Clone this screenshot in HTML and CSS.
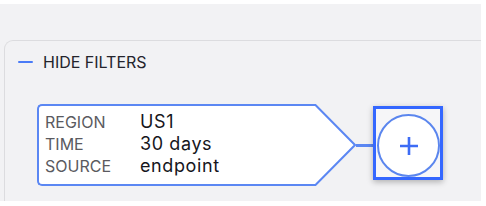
FILE: index.html
```html
<!DOCTYPE html>
<html lang="en">
<head>
<meta charset="utf-8">
<title>Filters</title>
<link rel="stylesheet" href="styles.css">
</head>
<body>
<div class="frame">
  <section class="card">
    <header class="card-head">
      <span class="minus"></span>
      <span class="head-label">HIDE FILTERS</span>
    </header>
    <div class="filter-row">
      <div class="pill">
        <div class="pill-body">
          <span class="key">REGION</span><span class="val">US1</span>
          <span class="key">TIME</span><span class="val">30 days</span>
          <span class="key">SOURCE</span><span class="val">endpoint</span>
        </div>
        <svg class="pill-tip" width="41" height="82" viewBox="0 0 41 82">
          <polygon points="0,1 0.5,1 40,41 0.5,81 0,81" fill="#ffffff"/>
          <polyline points="0,1 0.5,1 40,41 0.5,81 0,81" fill="none" stroke="#5b87f3" stroke-width="2"/>
        </svg>
      </div>
      <span class="connector"></span>
      <div class="add-focus">
        <button class="add-btn" type="button" aria-label="Add filter">
          <svg width="20" height="20" viewBox="0 0 20 20">
            <path d="M10 1 V19 M1 10 H19" stroke="#3d6cf5" stroke-width="2.6" fill="none"/>
          </svg>
        </button>
      </div>
    </div>
  </section>
</div>
</body>
</html>
```

FILE: styles.css
```css
html, body {
  margin: 0;
  padding: 0;
  background: #ffffff;
}

body {
  font-family: Inter, "Noto Sans", "Liberation Sans", sans-serif;
  width: 486px;
  height: 206px;
  overflow: hidden;
}

.frame {
  margin-top: 4px;
  width: 481px;
  height: 197px;
  background: #f2f2f4;
  overflow: hidden;
  padding-top: 36px;
  box-sizing: border-box;
}

.card {
  margin-left: 4px;
  height: 200px;
  width: 520px;
  border-top: 1px solid #dcdcdf;
  border-left: 1px solid #dcdcdf;
  border-radius: 9px 0 0 0;
  background: #f2f2f4;
  box-sizing: border-box;
}

.card-head {
  display: flex;
  align-items: center;
  gap: 10px;
  padding: 11px 0 0 13px;
  height: 20px;
}

.minus {
  display: block;
  width: 15px;
  height: 2px;
  background: #4a7bf7;
  border-radius: 1px;
}

.head-label {
  font-size: 16px;
  line-height: 20px;
  color: #24242c;
}

.filter-row {
  display: flex;
  align-items: flex-start;
  margin-top: 32px;
  margin-left: 32px;
}

.pill {
  display: flex;
  height: 82px;
}

.pill-body {
  width: 278px;
  height: 82px;
  box-sizing: border-box;
  border: 2px solid #5b87f3;
  border-right: none;
  border-radius: 5px 0 0 5px;
  background: #ffffff;
  padding: 5px 0 0 6px;
  display: grid;
  grid-template-columns: 95px auto;
  grid-auto-rows: 22px;
  align-items: start;
}

.key {
  display: block;
  height: 22px;
  font-size: 16px;
  line-height: 22px;
  color: #5a5a60;
}

.val {
  display: block;
  height: 22px;
  font-size: 18px;
  line-height: 22px;
  letter-spacing: 0.6px;
  color: #16161c;
}

.pill-tip {
  display: block;
}

.connector {
  display: block;
  width: 17px;
  height: 3px;
  margin-top: 40px;
  background: #5b87f3;
}

.add-focus {
  margin-top: 2px;
  width: 70px;
  height: 74px;
  box-sizing: border-box;
  border: 3px solid #3467ff;
  padding: 5px 0 0 1px;
  background: #f6f6f8;
  box-shadow: 0 2px 6px rgba(0, 0, 0, 0.28);
  overflow: hidden;
}

.add-btn {
  width: 63px;
  height: 63px;
  border-radius: 50%;
  border: 2px solid #5b86ee;
  background: #ffffff;
  padding: 0;
  margin: 0;
  display: flex;
  align-items: center;
  justify-content: center;
}

.add-btn svg {
  display: block;
}
```
